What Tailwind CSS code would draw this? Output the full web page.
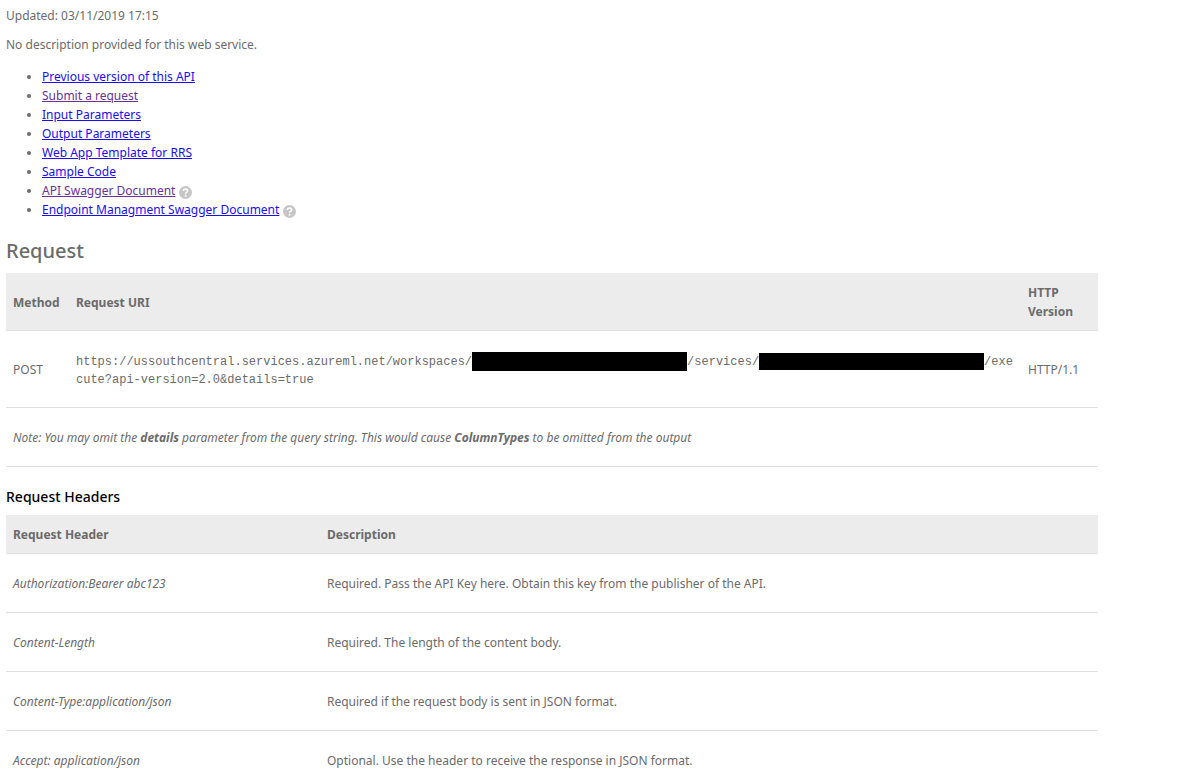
<!DOCTYPE html>
<html lang="en">
<head>
  <meta charset="UTF-8" />
  <meta name="viewport" content="width=device-width, initial-scale=1.0"/>
  <title>Request Response API Documentation</title>
  <script src="https://cdn.jsdelivr.net/npm/@tailwindcss/browser@4"></script>
</head>

<body class="bg-white text-[#6b6b6b] font-['Noto_Sans',sans-serif] text-[12px] leading-[19px]">
  <main class="w-[91%] ml-[6px] pt-[6px]">
    <p class="mb-[10px]">Updated: 03/11/2019 17:15</p>
    <p class="mb-[13px]">No description provided for this web service.</p>

    <!-- Page links -->
    <ul class="list-disc pl-9">
      <li><a href="#previous" class="underline text-[#1a0dee]">Previous version of this API</a></li>
      <li><a href="#submit" class="underline text-[#663399]">Submit a request</a></li>
      <li><a href="#input" class="underline text-[#1a0dee]">Input Parameters</a></li>
      <li><a href="#output" class="underline text-[#1a0dee]">Output Parameters</a></li>
      <li><a href="#template" class="underline text-[#1a0dee]">Web App Template for RRS</a></li>
      <li><a href="#sample" class="underline text-[#1a0dee]">Sample Code</a></li>
      <li>
        <a href="#swagger" class="underline text-[#663399]">API Swagger Document</a>
        <svg class="inline size-[13px] align-[-4px]" viewBox="0 0 13 13" fill="none" role="img" aria-label="Help">
          <circle cx="6.5" cy="6.5" r="6.5" fill="#c6c6c6"/>
          <path d="M4.4 5.1C4.4 3.7 5.3 3 6.5 3S8.6 3.7 8.6 4.9C8.6 6.3 6.6 6.2 6.6 7.8" stroke="#fff" stroke-width="1.6"/>
          <circle cx="6.6" cy="9.8" r="1" fill="#fff"/>
        </svg>
      </li>
      <li>
        <a href="#endpoint" class="underline text-[#1a0dee]">Endpoint Managment Swagger Document</a>
        <svg class="inline size-[13px] align-[-4px]" viewBox="0 0 13 13" fill="none" role="img" aria-label="Help">
          <circle cx="6.5" cy="6.5" r="6.5" fill="#c6c6c6"/>
          <path d="M4.4 5.1C4.4 3.7 5.3 3 6.5 3S8.6 3.7 8.6 4.9C8.6 6.3 6.6 6.2 6.6 7.8" stroke="#fff" stroke-width="1.6"/>
          <circle cx="6.6" cy="9.8" r="1" fill="#fff"/>
        </svg>
      </li>
    </ul>

    <!-- Request -->
    <h2 class="mt-[18px] mb-2 text-[20px] leading-[28px] font-medium">Request</h2>
    <table class="w-full table-fixed text-left">
      <thead>
        <tr class="bg-[#ececec] border-b border-[#e0e0e0]">
          <th class="w-[63px] pt-[10px] pb-[9px] pl-[7px]">Method</th>
          <th class="pt-[10px] pb-[9px] pl-[7px]">Request URI</th>
          <th class="w-[77px] pt-[10px] pb-[9px] pl-[7px] pr-4">HTTP Version</th>
        </tr>
      </thead>
      <tbody>
        <tr class="border-b border-[#e0e0e0]">
          <td class="pt-[20px] pb-[19px] pl-[7px]">POST</td>
          <td class="pt-[22px] pb-[18px] px-[7px] font-['Liberation_Mono',monospace] leading-[18px] break-all">https://ussouthcentral.services.azureml.net/workspaces/<span class="inline-block align-middle w-[215px] h-[19px] -my-1 bg-black"></span>/services/<span class="inline-block align-middle w-[225px] h-[17px] -my-1 bg-black"></span>/exe<wbr>cute?api-version=2.0&amp;details=true</td>
          <td class="pt-[20px] pb-[19px] pl-[7px]">HTTP/1.1</td>
        </tr>
        <tr class="border-b border-[#e0e0e0]">
          <td colspan="3" class="pt-[20px] pb-[19px] pl-[7px] italic">Note: You may omit the <strong>details</strong> parameter from the query string. This would cause <strong>ColumnTypes</strong> to be omitted from the output</td>
        </tr>
      </tbody>
    </table>

    <!-- Request headers -->
    <h3 class="mt-5 mb-[9px] text-[14px] leading-[19px] font-medium text-black">Request Headers</h3>
    <table class="w-full table-fixed text-left">
      <thead>
        <tr class="bg-[#ececec] border-b border-[#e0e0e0]">
          <th class="w-[314px] pt-[10px] pb-[9px] pl-[7px]">Request Header</th>
          <th class="pt-[10px] pb-[9px] pl-[7px]">Description</th>
        </tr>
      </thead>
      <tbody>
        <tr class="border-b border-[#e0e0e0]">
          <td class="pt-[20px] pb-[19px] pl-[7px] italic">Authorization:Bearer abc123</td>
          <td class="pt-[20px] pb-[19px] pl-[7px]">Required. Pass the API Key here. Obtain this key from the publisher of the API.</td>
        </tr>
        <tr class="border-b border-[#e0e0e0]">
          <td class="pt-[20px] pb-[19px] pl-[7px] italic">Content-Length</td>
          <td class="pt-[20px] pb-[19px] pl-[7px]">Required. The length of the content body.</td>
        </tr>
        <tr class="border-b border-[#e0e0e0]">
          <td class="pt-[20px] pb-[19px] pl-[7px] italic">Content-Type:application/json</td>
          <td class="pt-[20px] pb-[19px] pl-[7px]">Required if the request body is sent in JSON format.</td>
        </tr>
        <tr>
          <td class="pt-[20px] pl-[7px] italic">Accept: application/json</td>
          <td class="pt-[20px] pl-[7px]">Optional. Use the header to receive the response in JSON format.</td>
        </tr>
      </tbody>
    </table>
  </main>
</body>
</html>
